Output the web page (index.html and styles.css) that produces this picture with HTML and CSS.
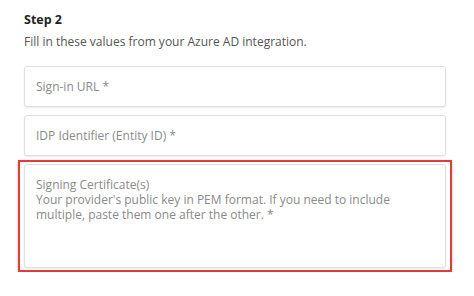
FILE: index.html
```html
<!DOCTYPE html>
<html lang="en">
<head>
    <meta charset="UTF-8">
    <meta name="viewport" content="width=device-width, initial-scale=1.0">
    <title>SSO Setup</title>
    <link rel="stylesheet" href="styles.css">
</head>
<body>
    <div class="container">
        <h2 class="step-title">Step 2</h2>
        <p class="step-desc">Fill in these values from your Azure AD integration.</p>

        <div class="field">
            <input type="text" placeholder="Sign-in URL *">
        </div>
        <div class="field field-last">
            <input type="text" placeholder="IDP Identifier (Entity ID) *">
        </div>
        <div class="highlight-box">
            <textarea placeholder="Signing Certificate(s)&#10;Your provider's public key in PEM format. If you need to include multiple, paste them one after the other. *"></textarea>
        </div>
    </div>
</body>
</html>
```

FILE: styles.css
```css
body {
    font-family: 'Open Sans', 'Noto Sans', sans-serif;
    background-color: #ffffff;
    margin: 0;
    padding: 0;
}
.container {
    padding: 11px 28px 0 24px;
}
.step-title {
    font-size: 12.5px;
    font-weight: 700;
    color: #222;
    margin: 0;
    line-height: 18px;
}
.step-desc {
    font-size: 12px;
    color: #555;
    margin: 4px 0 15px;
    line-height: 18px;
}
.field {
    margin-bottom: 8px;
}
.field-last {
    margin-bottom: 4px;
}
input[type="text"], textarea {
    display: block;
    width: 100%;
    box-sizing: border-box;
    font-family: 'Open Sans', 'Noto Sans', sans-serif;
    font-size: 12px;
    color: #333;
    border: 1px solid #dcdfe3;
    border-radius: 3px;
    box-shadow: 0 1px 2px rgba(0, 0, 0, 0.08);
    background: #fff;
    outline: none;
}
input[type="text"] {
    height: 41px;
    padding: 0 11px;
}
textarea {
    height: 104px;
    padding: 12px 11px;
    line-height: 15px;
    resize: none;
}
::placeholder {
    color: #8a8a8a;
    opacity: 1;
}
.highlight-box {
    margin: 0 -6px;
    padding: 2px 4px;
    border: 2px solid #e03c3c;
    box-shadow: 0 1px 3px rgba(0, 0, 0, 0.25);
}
```
